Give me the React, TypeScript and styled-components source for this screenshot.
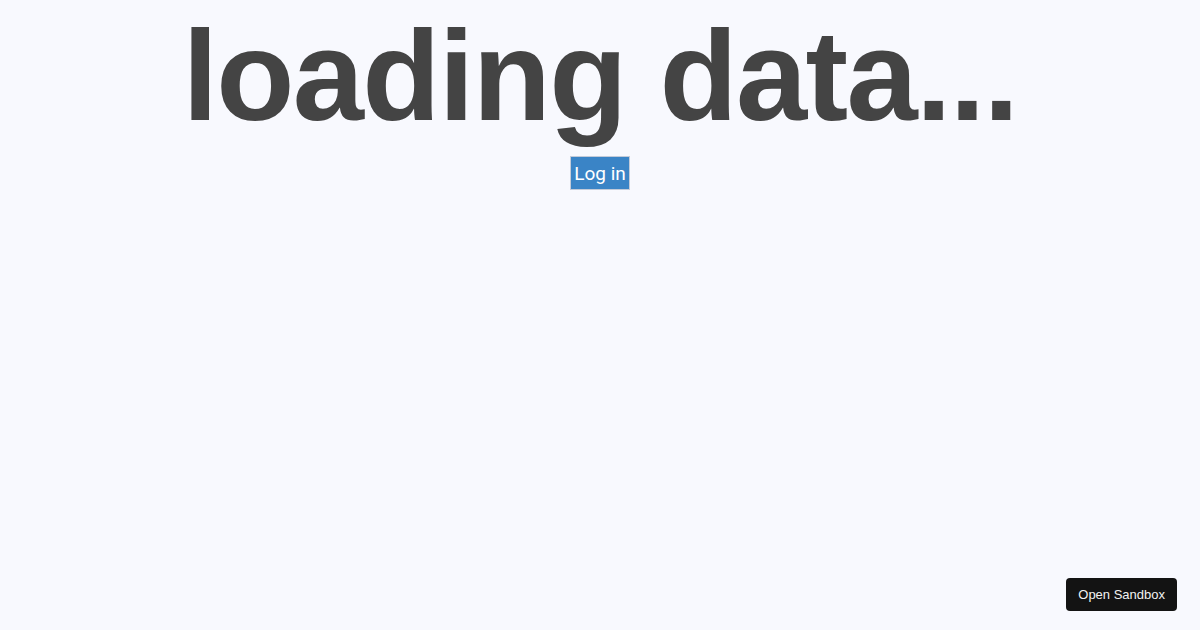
import { FC } from 'react';
import styled, { createGlobalStyle } from 'styled-components';

const GlobalStyle = createGlobalStyle`
	html, body {
		margin: 0;
		padding: 0;
		background: #f8f9fe;
	}
	#root {
		min-height: 100vh;
	}
`;

const Page = styled.main`
	position: relative;
	min-height: 100vh;
	display: flex;
	flex-direction: column;
	align-items: center;
	font-family: 'Liberation Sans', Arial, sans-serif;
`;

const Heading = styled.h1`
	margin: 12px 0 16px;
	font-size: 128px;
	line-height: 1;
	font-weight: 700;
	color: #444444;
	letter-spacing: -1.7px;
`;

const LoginButton = styled.button`
	height: 34px;
	padding: 0 3px;
	border: 1px solid #c3cbd9;
	background: #3a84c6;
	color: #ffffff;
	font-family: Roboto, 'Liberation Sans', sans-serif;
	font-size: 19px;
	cursor: pointer;
`;

const SandboxButton = styled.a`
	position: fixed;
	right: 23px;
	bottom: 19px;
	display: flex;
	align-items: center;
	height: 33px;
	padding: 0 12px;
	border-radius: 4px;
	background: #131313;
	color: #f2f2f2;
	font-family: 'Liberation Sans', Arial, sans-serif;
	font-size: 13px;
	text-decoration: none;
`;

const App: FC = () => (
	<>
		<GlobalStyle />
		<Page>
			<Heading>loading data...</Heading>
			<LoginButton type="button">Log in</LoginButton>
			<SandboxButton href="#">Open Sandbox</SandboxButton>
		</Page>
	</>
);

export default App;
